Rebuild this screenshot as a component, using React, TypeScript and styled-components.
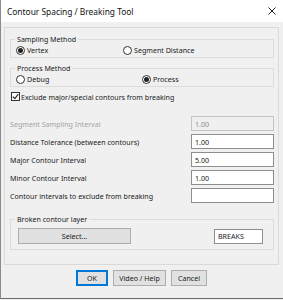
import React from "react";
import styled, { createGlobalStyle } from "styled-components";

const Global = createGlobalStyle`
  html, body { margin: 0; padding: 0; background: #f0f0f0; }
  body { font-family: "Noto Sans", "Open Sans", sans-serif; }
  * { box-sizing: border-box; }
`;

const Window = styled.div`
  width: 283px;
  height: 299px;
  display: flex;
  flex-direction: column;
  background: #f0f0f0;
  border-left: 1px solid #8c8c8c;
  border-bottom: 1px solid #6a6a6a;
  font-size: 7.1px;
  color: #1a1a1a;
`;

const TitleBar = styled.div`
  height: 22px;
  flex: none;
  background: #fff;
  display: flex;
  align-items: center;
  justify-content: space-between;
  padding: 0 7px 0 6px;
`;

const Title = styled.span`
  font-size: 8.4px;
  color: #111;
`;

const Panel = styled.div`
  margin: 5px 4px 0 3px;
  height: 238px;
  border: 1px solid #dadada;
  padding: 6px 4px 0 5px;
  display: flex;
  flex-direction: column;
`;

const Group = styled.fieldset<{ $mt?: number }>`
  margin: ${(p) => p.$mt ?? 0}px 0 0 0;
  padding: 0 4px 1px 4px;
  border: 1px solid #dcdcdc;
  min-width: 0;
`;

const Legend = styled.legend`
  padding: 0 2px;
  line-height: 10px;
  font-size: 7.1px;
`;

const RadioRow = styled.div<{ $col: number }>`
  display: grid;
  grid-template-columns: ${(p) => p.$col}px 1fr;
  height: 12px;
  align-items: center;
  padding-left: 1px;
`;

const Option = styled.label`
  display: flex;
  align-items: center;
  gap: 2px;
  white-space: nowrap;
`;

const RadioDot = styled.span<{ $on?: boolean }>`
  width: 9px;
  height: 9px;
  border-radius: 50%;
  border: 1px solid #333;
  background: #fff;
  display: flex;
  align-items: center;
  justify-content: center;
  &::after {
    content: "";
    width: 5px;
    height: 5px;
    border-radius: 50%;
    background: ${(p) => (p.$on ? "#222" : "transparent")};
  }
`;

const CheckRow = styled.label`
  margin: 3px 0 0 1px;
  height: 13px;
  display: flex;
  align-items: center;
  gap: 1px;
`;

const CheckBox = styled.span`
  width: 9px;
  height: 9px;
  border: 1px solid #333;
  background: #fff;
  display: flex;
  align-items: center;
  justify-content: center;
`;

const Fields = styled.div`
  margin-top: 13px;
  display: flex;
  flex-direction: column;
  gap: 3px;
`;

const FieldRow = styled.div`
  height: 15px;
  display: flex;
  align-items: center;
  justify-content: space-between;
`;

const FieldLabel = styled.span<{ $disabled?: boolean }>`
  color: ${(p) => (p.$disabled ? "#a3a3a3" : "#1a1a1a")};
`;

const Input = styled.div<{ $disabled?: boolean; $w?: number }>`
  width: ${(p) => p.$w ?? 83}px;
  height: 15px;
  border: 1px solid ${(p) => (p.$disabled ? "#c4c4c4" : "#8e8e8e")};
  background: ${(p) => (p.$disabled ? "#f0f0f0" : "#fff")};
  color: ${(p) => (p.$disabled ? "#8d8d8d" : "#1a1a1a")};
  padding-left: 3px;
  display: flex;
  align-items: center;
  font-size: 7.1px;
`;

const LayerRow = styled.div`
  padding: 4px 6px 4px 3px;
  display: flex;
  align-items: center;
  justify-content: space-between;
`;

const Button = styled.button<{ $w: number; $default?: boolean }>`
  width: ${(p) => p.$w}px;
  height: 16px;
  padding: 0;
  margin: 0;
  font-family: inherit;
  font-size: 7.1px;
  color: #1a1a1a;
  background: #e1e1e1;
  border: 1px solid ${(p) => (p.$default ? "#0078d7" : "#adadad")};
  box-shadow: ${(p) => (p.$default ? "inset 0 0 0 1px #0078d7" : "none")};
  display: flex;
  align-items: center;
  justify-content: center;
`;

const ButtonBar = styled.div`
  margin-top: 5px;
  display: flex;
  justify-content: center;
  gap: 5px;
  padding-right: 1px;
`;

const Close = () => (
  <svg width="8" height="8" viewBox="0 0 8 8">
    <path d="M0.5 0.5 L7.5 7.5 M7.5 0.5 L0.5 7.5" stroke="#222" strokeWidth="1" />
  </svg>
);

const Check = () => (
  <svg width="7" height="7" viewBox="0 0 7 7">
    <path d="M0.8 3.6 L2.8 5.6 L6.3 1.2" stroke="#222" strokeWidth="1.1" fill="none" />
  </svg>
);

export default function App() {
  return (
    <>
      <Global />
      <Window>
        <TitleBar>
          <Title>Contour Spacing / Breaking Tool</Title>
          <Close />
        </TitleBar>
        <Panel>
          <Group>
            <Legend>Sampling Method</Legend>
            <RadioRow $col={107}>
              <Option>
                <RadioDot $on />
                Vertex
              </Option>
              <Option>
                <RadioDot />
                Segment Distance
              </Option>
            </RadioRow>
          </Group>
          <Group $mt={5}>
            <Legend>Process Method</Legend>
            <RadioRow $col={126}>
              <Option>
                <RadioDot />
                Debug
              </Option>
              <Option>
                <RadioDot $on />
                Process
              </Option>
            </RadioRow>
          </Group>
          <CheckRow>
            <CheckBox>
              <Check />
            </CheckBox>
            Exclude major/special contours from breaking
          </CheckRow>
          <Fields>
            <FieldRow>
              <FieldLabel $disabled>Segment Sampling Interval</FieldLabel>
              <Input $disabled>1.00</Input>
            </FieldRow>
            <FieldRow>
              <FieldLabel>Distance Tolerance (between contours)</FieldLabel>
              <Input>1.00</Input>
            </FieldRow>
            <FieldRow>
              <FieldLabel>Major Contour Interval</FieldLabel>
              <Input>5.00</Input>
            </FieldRow>
            <FieldRow>
              <FieldLabel>Minor Contour Interval</FieldLabel>
              <Input>1.00</Input>
            </FieldRow>
            <FieldRow>
              <FieldLabel>Contour intervals to exclude from breaking</FieldLabel>
              <Input />
            </FieldRow>
          </Fields>
          <Group $mt={11}>
            <Legend>Broken contour layer</Legend>
            <LayerRow>
              <Button $w={113}>Select...</Button>
              <Input $w={49}>BREAKS</Input>
            </LayerRow>
          </Group>
        </Panel>
        <ButtonBar>
          <Button $w={32} $default>
            OK
          </Button>
          <Button $w={53}>Video / Help</Button>
          <Button $w={36}>Cancel</Button>
        </ButtonBar>
      </Window>
    </>
  );
}
